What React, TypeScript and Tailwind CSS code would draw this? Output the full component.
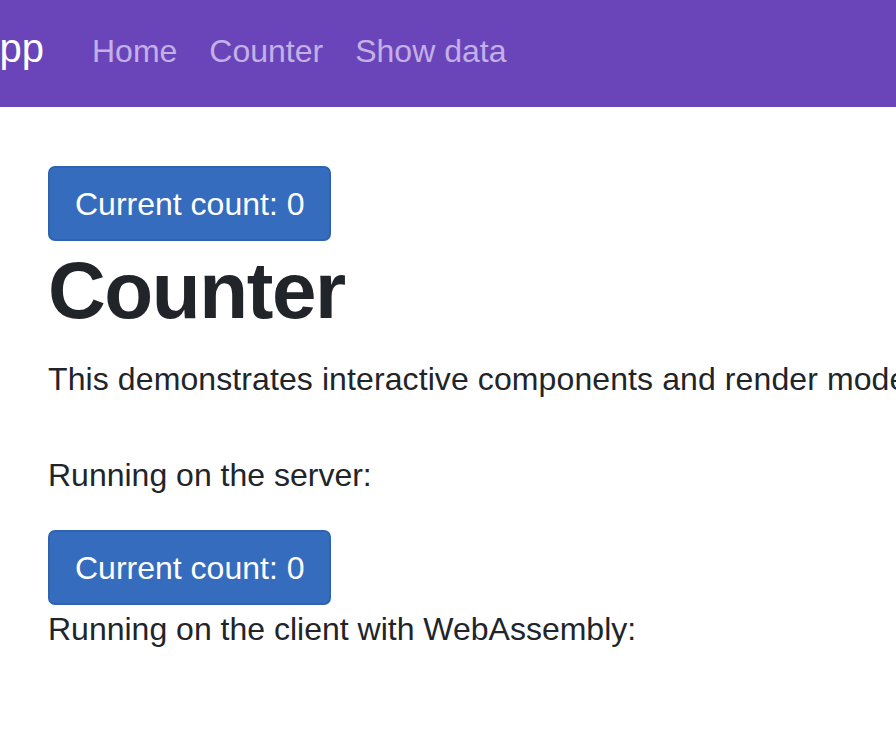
export default function App() {
  const font = { fontFamily: '"Liberation Sans", Arial, sans-serif' };
  return (
    <div className="min-h-[735px] w-[896px] overflow-hidden bg-white text-[#212529]" style={font}>
      <nav className="h-[107px] bg-[#6a45b9] pt-[24px]">
        <div className="flex items-baseline whitespace-nowrap">
          <div className="flex w-[44px] shrink-0 justify-end">
            <a className="shrink-0 text-[40px] leading-[48px] text-white">BlazorApp</a>
          </div>
          <div className="ml-[32px] flex items-baseline">
            <a className="px-[16px] text-[32px] leading-[48px] text-[#c3b0e7]">Home</a>
            <a className="px-[16px] text-[32px] leading-[48px] text-[#c3b0e7]">Counter</a>
            <a className="px-[16px] text-[32px] leading-[48px] text-[#c3b0e7]">Show data</a>
          </div>
        </div>
      </nav>
      <main className="pl-[48px] pt-[59px]">
        <button className="flex h-[75px] items-center rounded-[7px] border-2 border-[#2f63b0] bg-[#356cbe] px-[25px] text-[32px] leading-[48px] text-white">
          Current count: 0
        </button>
        <h1 className="mt-[2px] mb-[16px] whitespace-nowrap text-[80px] font-bold leading-[96px] tracking-[-1.4px]">
          Counter
        </h1>
        <p className="mb-[48px] whitespace-nowrap text-[32px] leading-[48px] tracking-[0.1px]">
          This demonstrates interactive components and render modes.
        </p>
        <p className="mb-[31px] text-[32px] leading-[48px]">Running on the server:</p>
        <button className="flex h-[75px] items-center rounded-[7px] border-2 border-[#2f63b0] bg-[#356cbe] px-[25px] text-[32px] leading-[48px] text-white">
          Current count: 0
        </button>
        <p className="text-[32px] leading-[48px]">Running on the client with WebAssembly:</p>
      </main>
    </div>
  );
}
